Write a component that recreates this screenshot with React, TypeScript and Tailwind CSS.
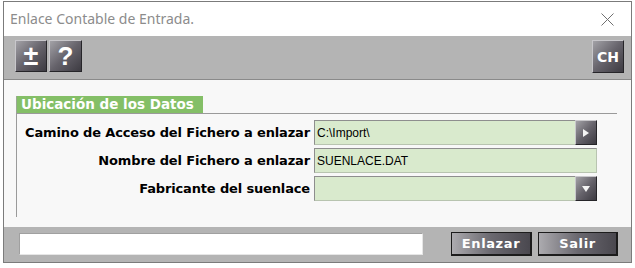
import React from "react";

const sans = { fontFamily: '"DejaVu Sans", sans-serif' };

interface DarkButtonProps {
  className?: string;
  children?: React.ReactNode;
}
function DarkButton(props: DarkButtonProps) {
  return (
    <div
      className={
        "flex items-center justify-center bg-linear-to-br from-[#a3a2a7] via-[#66636b] to-[#3d3b42] border border-t-[#c8c7cb] border-l-[#c8c7cb] border-b-[#262529] border-r-[#262529] text-white font-bold " +
        (props.className ?? "")
      }
    >
      {props.children}
    </div>
  );
}

interface FieldProps {
  label: string;
  value?: string;
  icon?: "right" | "down";
}
function Field(props: FieldProps) {
  return (
    <div className="flex items-center h-[25px]">
      <div
        className="w-[294px] pr-[1px] text-right text-[13px] font-bold text-black leading-none whitespace-nowrap tracking-[-0.15px]"
        style={sans}
      >
        {props.label}
      </div>
      <div className="ml-[3px] w-[283px] h-[25px] flex items-center bg-[#d9eacd] border border-t-[#8e8e8e] border-l-[#8e8e8e] border-b-[#b8c4b0] border-r-[#b8c4b0]">
        <span
          className="flex-1 pl-[2px] text-[12px] text-black leading-none"
          style={{ fontFamily: '"Liberation Sans", sans-serif' }}
        >
          {props.value}
        </span>
        {props.icon && (
          <DarkButton className="w-[22px] h-[25px] -mr-[1px]">
            {props.icon == "right" ? (
              <svg width="8" height="10" viewBox="0 0 8 10">
                <polygon points="1,1 7,5 1,9" fill="#f4f4f4" />
              </svg>
            ) : (
              <svg width="10" height="8" viewBox="0 0 10 8">
                <polygon points="1,1 9,1 5,7" fill="#f4f4f4" />
              </svg>
            )}
          </DarkButton>
        )}
      </div>
    </div>
  );
}

export default function App() {
  return (
    <div className="w-[635px] h-[268px] bg-white pl-[3px] pt-[1px]">
      <div className="w-[629px] h-[262px] border border-[#7b7b7b] flex flex-col">
        {/* title bar */}
        <div className="h-[34px] bg-white flex items-center justify-between pl-[6px] pr-[17px]">
          <span
            className="text-[14px] text-[#8c8c8c] leading-none"
            style={{ fontFamily: '"Noto Sans", sans-serif' }}
          >
            Enlace Contable de Entrada.
          </span>
          <svg width="13" height="13" viewBox="0 0 13 13">
            <path d="M0.5 0.5 L12.5 12.5 M12.5 0.5 L0.5 12.5" stroke="#707070" strokeWidth="1" />
          </svg>
        </div>

        {/* toolbar */}
        <div className="h-[44px] bg-[#b4b4b4] border-b border-[#8a8a8a] flex items-start pt-[4px] pl-[11px] pr-[7px]">
          <div className="flex gap-[2px]">
            <DarkButton className="w-[32px] h-[32px] text-[27px] leading-none">
              <span style={{ fontFamily: '"Liberation Sans", sans-serif' }}>±</span>
            </DarkButton>
            <DarkButton className="w-[33px] h-[32px] text-[26px] leading-none">
              <span style={{ fontFamily: '"Liberation Sans", sans-serif' }}>?</span>
            </DarkButton>
          </div>
          <div className="flex-1" />
          <DarkButton className="w-[32px] h-[33px] text-[14px] leading-none">
            <span style={sans}>CH</span>
          </DarkButton>
        </div>

        {/* content */}
        <div className="h-[147px] bg-[#f8f8f8] pl-[12px] pt-[16px]">
          <div
            className="w-[187px] h-[17px] bg-[#84bf67] border-l border-[#9aa894] text-white text-[13.5px] font-bold leading-none flex items-center pl-[4px]"
            style={sans}
          >
            Ubicación de los Datos
          </div>
          <div className="w-[601px] h-[104px] border-t border-l border-[#9a9a9a] pt-[6px] flex flex-col gap-[3px]">
            <Field label="Camino de Acceso del Fichero a enlazar" value="C:\Import\" icon="right" />
            <Field label="Nombre del Fichero a enlazar" value="SUENLACE.DAT" />
            <Field label="Fabricante del suenlace" value="" icon="down" />
          </div>
        </div>

        {/* bottom bar */}
        <div className="h-[35px] bg-[#b4b4b4] flex items-start pl-[15px] pr-[13px]">
          <div className="mt-[6px] w-[404px] h-[22px] bg-white border border-t-[#a0a0a0] border-l-[#a0a0a0] border-b-[#e6e6e6] border-r-[#e6e6e6]" />
          <div className="flex-1" />
          <div className="mt-[5px] flex gap-[6px]">
            <div
              className="w-[81px] h-[24px] border border-[#1c1c1c] border-b-2 border-r-2 bg-linear-to-r from-[#acabaf] via-[#6b6970] to-[#4a484f] flex items-center justify-center text-white text-[13px] font-bold tracking-[0.6px] leading-none"
              style={sans}
            >
              Enlazar
            </div>
            <div
              className="w-[80px] h-[24px] border border-[#1c1c1c] border-b-2 border-r-2 bg-linear-to-r from-[#acabaf] via-[#6b6970] to-[#4a484f] flex items-center justify-center text-white text-[13px] font-bold tracking-[0.6px] leading-none"
              style={sans}
            >
              Salir
            </div>
          </div>
        </div>
      </div>
    </div>
  );
}
